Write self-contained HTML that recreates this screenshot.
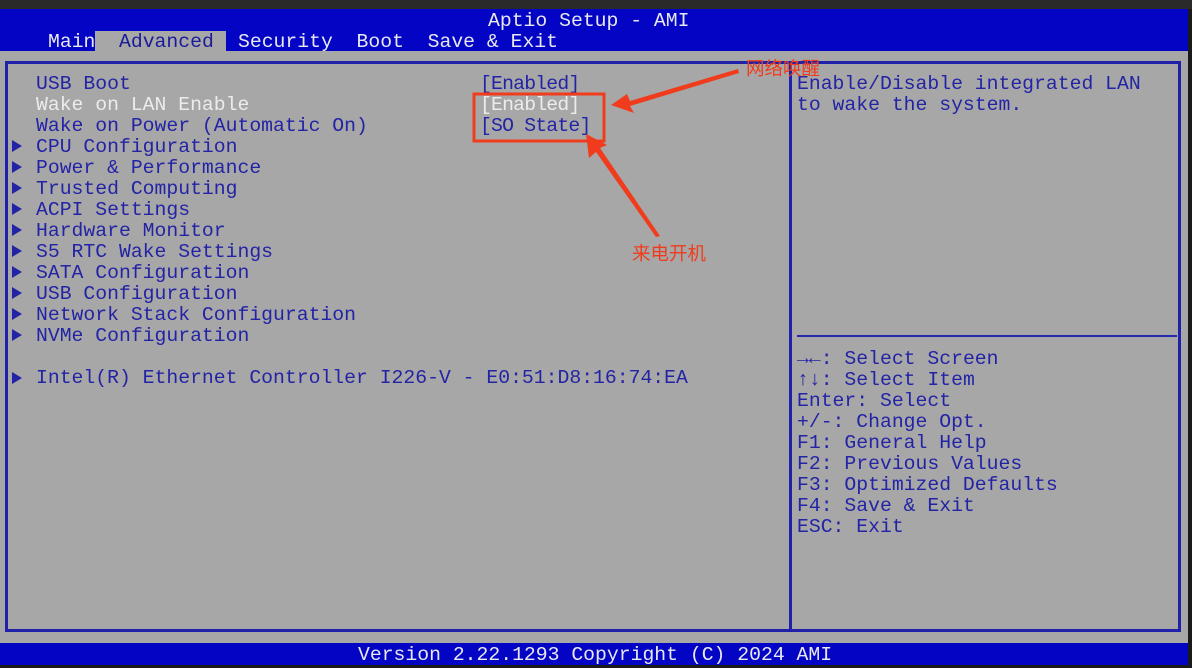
<!DOCTYPE html>
<html><head><meta charset="utf-8"><style>
html,body{margin:0;padding:0}
body{width:1192px;height:668px;position:relative;overflow:hidden;background:#1a1a1a;font-family:"Liberation Mono",monospace;font-size:19.75px}
.t{position:absolute;white-space:pre;line-height:21px;color:#2323a6}
.w{color:#ececec}
.h{color:#e8e8f0}
</style></head><body>
<div style="position:absolute;left:0;top:0;width:1192px;height:9px;background:#2a2a2a"></div>
<div style="position:absolute;left:0;top:9px;width:1188px;height:42px;background:#0404c4"></div>
<div style="position:absolute;left:0;top:51px;width:1188px;height:592px;background:#a7a7a7"></div>
<div style="position:absolute;left:0;top:643px;width:1188px;height:22px;background:#0404c4"></div>
<div style="position:absolute;left:95px;top:31px;width:131px;height:21px;background:#a7a7a7"></div>
<div style="position:absolute;left:5px;top:61px;width:1176px;height:571px;border:3px solid #2020a8;box-sizing:border-box"></div>
<div style="position:absolute;left:789px;top:62px;width:3px;height:570px;background:#2020a8"></div>
<div style="position:absolute;left:797px;top:335px;width:380px;height:2px;background:#2828b0"></div>

<div class="t h" style="left:488px;top:11px">Aptio Setup - AMI</div>
<div class="t h" style="left:48px;top:32px">Main</div>
<div class="t" style="left:119px;top:32px;color:#1a1a9a">Advanced</div>
<div class="t h" style="left:238px;top:32px">Security  Boot  Save &amp; Exit</div>

<div class="t" style="left:36px;top:74px">USB Boot
<span class="w">Wake on LAN Enable</span>
Wake on Power (Automatic On)
CPU Configuration
Power &amp; Performance
Trusted Computing
ACPI Settings
Hardware Monitor
S5 RTC Wake Settings
SATA Configuration
USB Configuration
Network Stack Configuration
NVMe Configuration

Intel(R) Ethernet Controller I226-V - E0:51:D8:16:74:EA</div>
<svg style="position:absolute;left:0;top:0" width="1192" height="668">
<g fill="#2323a6">
<polygon points="12,140 22,146 12,152"/><polygon points="12,161 22,167 12,173"/><polygon points="12,182 22,188 12,194"/>
<polygon points="12,203 22,209 12,215"/><polygon points="12,224 22,230 12,236"/><polygon points="12,245 22,251 12,257"/>
<polygon points="12,266 22,272 12,278"/><polygon points="12,287 22,293 12,299"/><polygon points="12,308 22,314 12,320"/>
<polygon points="12,329 22,335 12,341"/><polygon points="12,372 22,378 12,384"/>
</g>
</svg>
<div class="t" style="left:480px;top:74px;letter-spacing:-0.8px">[Enabled]
<span class="w">[Enabled]</span>
[SO State]</div>
<div class="t" style="left:797px;top:74px">Enable/Disable integrated LAN
to wake the system.</div>
<div class="t" style="left:797px;top:349px"><b>→←</b>: Select Screen
<b>↑↓</b>: Select Item
Enter: Select
+/-: Change Opt.
F1: General Help
F2: Previous Values
F3: Optimized Defaults
F4: Save &amp; Exit
ESC: Exit</div>
<div class="t h" style="left:358px;top:645px">Version 2.22.1293 Copyright (C) 2024 AMI</div>

<svg style="position:absolute;left:0;top:0" width="1192" height="668">
<rect x="474" y="94" width="130" height="47" fill="none" stroke="#f03c1c" stroke-width="3"/>
<polygon points="738,69 739,73 630,106 634,113 611,105 627,94 630,101" fill="#f03c1c"/>
<polygon points="656,237 660,236 600,148 607,145 586,134 589,158 596,152" fill="#f03c1c"/>
</svg>
<div class="t" style="left:746px;top:58px;color:#f03c1c;font-family:'Noto Sans CJK SC',sans-serif;font-size:18.5px">网络唤醒</div>
<div class="t" style="left:632px;top:243px;color:#f03c1c;font-family:'Noto Sans CJK SC',sans-serif;font-size:18.5px">来电开机</div>
</body></html>
